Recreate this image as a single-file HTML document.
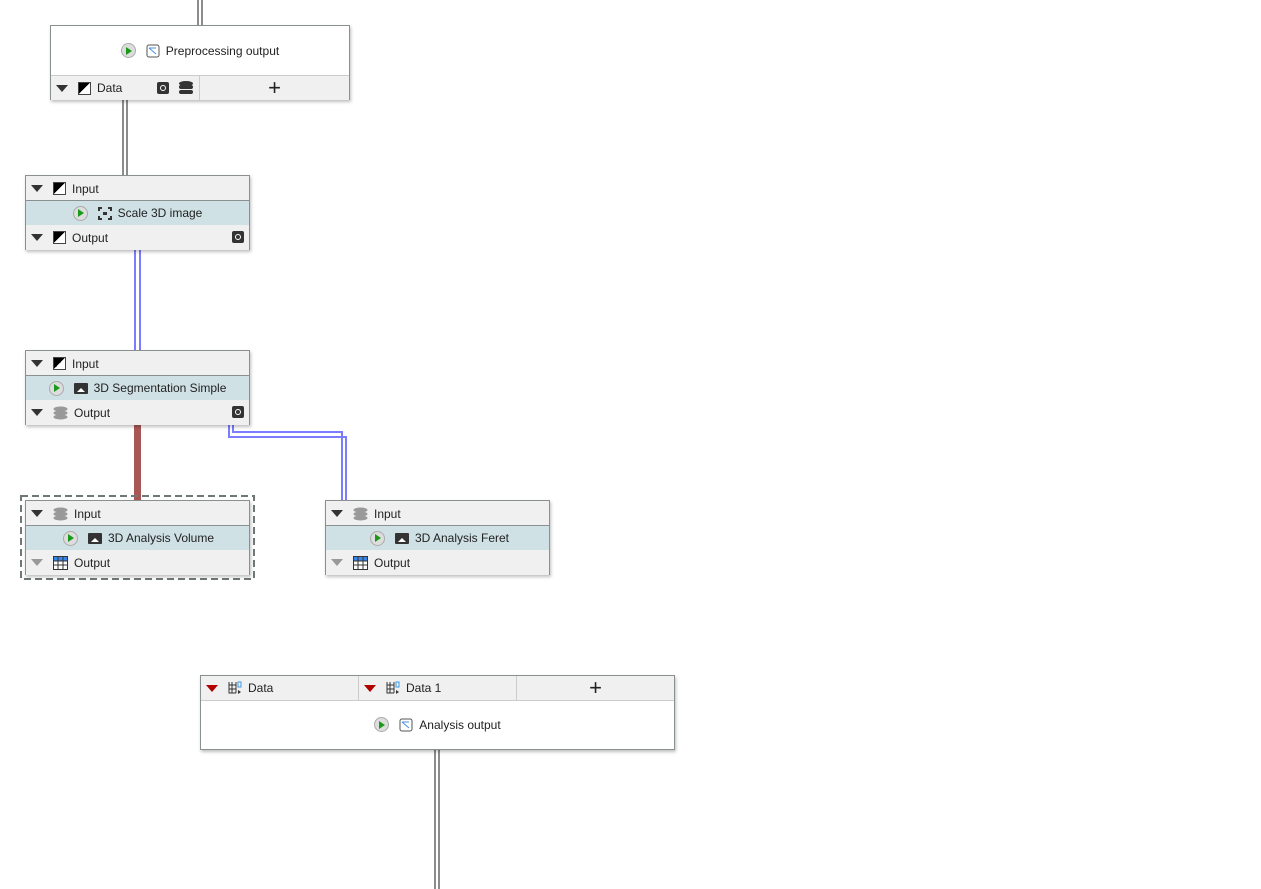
<!DOCTYPE html>
<html><head><meta charset="utf-8"><style>
body{margin:0;width:1261px;height:889px;background:#fff;position:relative;overflow:hidden;font-family:"Liberation Sans",Arial,sans-serif;font-size:12px;color:#222}
.n{position:absolute;border:1px solid #8a9090;box-shadow:1px 2px 3px rgba(0,0,0,.25);box-sizing:border-box;background:#f0f0f0}
.r{position:absolute;left:0;right:0;height:25px;box-sizing:border-box;display:flex;align-items:center}
.g{background:#f0f0f0}
.t{background:#cfe1e5;border-top:1px solid #8a9090;border-bottom:1px solid #8a9090;justify-content:center}
.tri{width:0;height:0;border-left:6px solid transparent;border-right:6px solid transparent;border-top:7px solid #333;margin:0 10px 0 5px}
.tri.l{border-top-color:#999}.tri.red{border-top-color:#b00000}
.bw{width:13px;height:13px;border:1px solid #444;box-sizing:border-box;background:linear-gradient(135deg,#000 50%,#fff 50%);margin-right:6px}
.play{width:15px;height:15px;border-radius:50%;background:#ddd;border:1px solid #aaa;box-sizing:border-box;position:relative;margin-right:10px}
.play:after{content:"";position:absolute;left:4px;top:2.5px;border-left:6px solid #1a9a1a;border-top:4px solid transparent;border-bottom:4px solid transparent}
.img{width:14px;height:11px;background:#333;border-radius:1px;margin-right:6px;position:relative}
.img:after{content:"";position:absolute;left:3px;bottom:2px;border-left:4px solid transparent;border-right:4px solid transparent;border-bottom:4px solid #fff}
.ico{display:inline-block;margin-right:6px}
.snap{position:absolute;width:12px;height:12px;background:#333;border-radius:2px}
.snap:after{content:"";position:absolute;left:3px;top:3px;width:4px;height:4px;border:1px solid #fff;border-radius:50%}
</style></head><body>
<svg width="1261" height="889" style="position:absolute;left:0;top:0">
<g fill="#8c8c8c"><rect x="197" y="0" width="2" height="25"/><rect x="201" y="0" width="2" height="25"/>
<rect x="122" y="100" width="2" height="75"/><rect x="126" y="100" width="2" height="75"/>
<rect x="434" y="750" width="2" height="139"/><rect x="438" y="750" width="2" height="139"/></g>
<g fill="#7c7cff"><rect x="134" y="250" width="2" height="100"/><rect x="139" y="250" width="2" height="100"/></g>
<rect x="134" y="425" width="7" height="75" fill="#a85656"/>
<g fill="none" stroke="#7c7cff" stroke-width="2"><path d="M229 425V437H346V500"/><path d="M233 425V432H342V500"/></g>
<rect x="21" y="496" width="233" height="83" fill="none" stroke="#6f7878" stroke-width="2" stroke-dasharray="7,4"/>
</svg>

<!-- Preprocessing -->
<div class="n" style="left:50px;top:25px;width:300px;height:75px;background:#fff">
 <div class="r" style="top:12px;justify-content:center"><span class="play"></span>
 <svg class="ico" width="14" height="14"><rect x="1" y="1" width="12" height="12" rx="2" fill="#fff" stroke="#555"/><path d="M3 4L10 10M3 4H10" stroke="#4a8fe0" fill="none"/></svg>Preprocessing output</div>
 <div class="r g" style="top:49px;border-top:1px solid #ccc"><span class="tri"></span><span class="bw"></span>Data
 <span class="snap" style="left:106px;top:6px"></span>
 <svg style="position:absolute;left:128px;top:5px" width="14" height="14"><g fill="#333"><ellipse cx="7" cy="2.5" rx="7" ry="2.5"/><rect x="0" y="4" width="14" height="4" rx="2"/><rect x="0" y="9" width="14" height="4" rx="2"/></g></svg>
 <div style="position:absolute;left:148px;top:0;bottom:0;border-left:1px solid #ccc;right:0;display:flex;justify-content:center;align-items:center;font-size:22px;font-weight:300">+</div></div>
</div>

<!-- Scale -->
<div class="n" style="left:25px;top:175px;width:225px;height:75px">
 <div class="r g" style="top:0"><span class="tri"></span><span class="bw"></span>Input</div>
 <div class="r t" style="top:24px;height:26px"><span class="play"></span><svg class="ico" width="14" height="13"><path d="M1 4V1H4M10 1H13V4M13 9V12H10M4 12H1V9" stroke="#333" stroke-width="2" fill="none"/><rect x="5" y="5" width="4" height="3" fill="#333"/></svg>Scale 3D image</div>
 <div class="r g" style="top:49px"><span class="tri"></span><span class="bw"></span>Output<span class="snap" style="right:5px;top:6px"></span></div>
</div>

<!-- Seg -->
<div class="n" style="left:25px;top:350px;width:225px;height:75px">
 <div class="r g" style="top:0"><span class="tri"></span><span class="bw"></span>Input</div>
 <div class="r t" style="top:24px;height:26px"><span class="play"></span><span class="img"></span>3D Segmentation Simple</div>
 <div class="r g" style="top:49px"><span class="tri"></span><svg class="ico" width="15" height="14"><g fill="#999"><ellipse cx="7.5" cy="3" rx="7" ry="2.5"/><ellipse cx="7.5" cy="7" rx="7" ry="2.5"/><ellipse cx="7.5" cy="11" rx="7" ry="2.5"/></g></svg>Output<span class="snap" style="right:5px;top:6px"></span></div>
</div>

<!-- Volume -->
<div class="n" style="left:25px;top:500px;width:225px;height:75px">
 <div class="r g" style="top:0"><span class="tri"></span><svg class="ico" width="15" height="14"><g fill="#999"><ellipse cx="7.5" cy="3" rx="7" ry="2.5"/><ellipse cx="7.5" cy="7" rx="7" ry="2.5"/><ellipse cx="7.5" cy="11" rx="7" ry="2.5"/></g></svg>Input</div>
 <div class="r t" style="top:24px;height:26px;padding-left:2px"><span class="play"></span><span class="img"></span>3D Analysis Volume</div>
 <div class="r g" style="top:49px"><span class="tri l"></span><svg class="ico" width="15" height="14"><rect x="0.5" y="0.5" width="14" height="13" fill="#fff" stroke="#333"/><rect x="1" y="1" width="13" height="4" fill="#3a86e8"/><path d="M0 5H15M0 9H15M5 0V14M10 0V14" stroke="#333"/></svg>Output</div>
</div>

<!-- Feret -->
<div class="n" style="left:325px;top:500px;width:225px;height:75px">
 <div class="r g" style="top:0"><span class="tri"></span><svg class="ico" width="15" height="14"><g fill="#999"><ellipse cx="7.5" cy="3" rx="7" ry="2.5"/><ellipse cx="7.5" cy="7" rx="7" ry="2.5"/><ellipse cx="7.5" cy="11" rx="7" ry="2.5"/></g></svg>Input</div>
 <div class="r t" style="top:24px;height:26px;padding-left:4px"><span class="play"></span><span class="img"></span>3D Analysis Feret</div>
 <div class="r g" style="top:49px"><span class="tri l"></span><svg class="ico" width="15" height="14"><rect x="0.5" y="0.5" width="14" height="13" fill="#fff" stroke="#333"/><rect x="1" y="1" width="13" height="4" fill="#3a86e8"/><path d="M0 5H15M0 9H15M5 0V14M10 0V14" stroke="#333"/></svg>Output</div>
</div>

<!-- Analysis output -->
<div class="n" style="left:200px;top:675px;width:475px;height:75px;background:#fff">
 <div class="r g" style="top:0;border-bottom:1px solid #ccc">
  <div style="width:157px;height:100%;display:flex;align-items:center;border-right:1px solid #ccc"><span class="tri red"></span><svg class="ico" width="14" height="14"><path d="M1 1V12H8M1 4H8M1 8H8M4 1V12M8 1V12" stroke="#333" fill="none"/><path d="M10 1H13V6H10Z" stroke="#3a9ae8" fill="none"/><path d="M10 9L13 11L10 13Z" fill="#333"/></svg>Data</div>
  <div style="width:157px;height:100%;display:flex;align-items:center;border-right:1px solid #ccc"><span class="tri red"></span><svg class="ico" width="14" height="14"><path d="M1 1V12H8M1 4H8M1 8H8M4 1V12M8 1V12" stroke="#333" fill="none"/><path d="M10 1H13V6H10Z" stroke="#3a9ae8" fill="none"/><path d="M10 9L13 11L10 13Z" fill="#333"/></svg>Data 1</div>
  <div style="flex:1;display:flex;justify-content:center;font-size:22px;font-weight:300">+</div>
 </div>
 <div class="r" style="top:36px;justify-content:center"><span class="play"></span>
 <svg class="ico" width="14" height="14"><rect x="1" y="1" width="12" height="12" rx="2" fill="#fff" stroke="#555"/><path d="M3 4L10 10M3 4H10" stroke="#4a8fe0" fill="none"/></svg>Analysis output</div>
</div>
</body></html>
